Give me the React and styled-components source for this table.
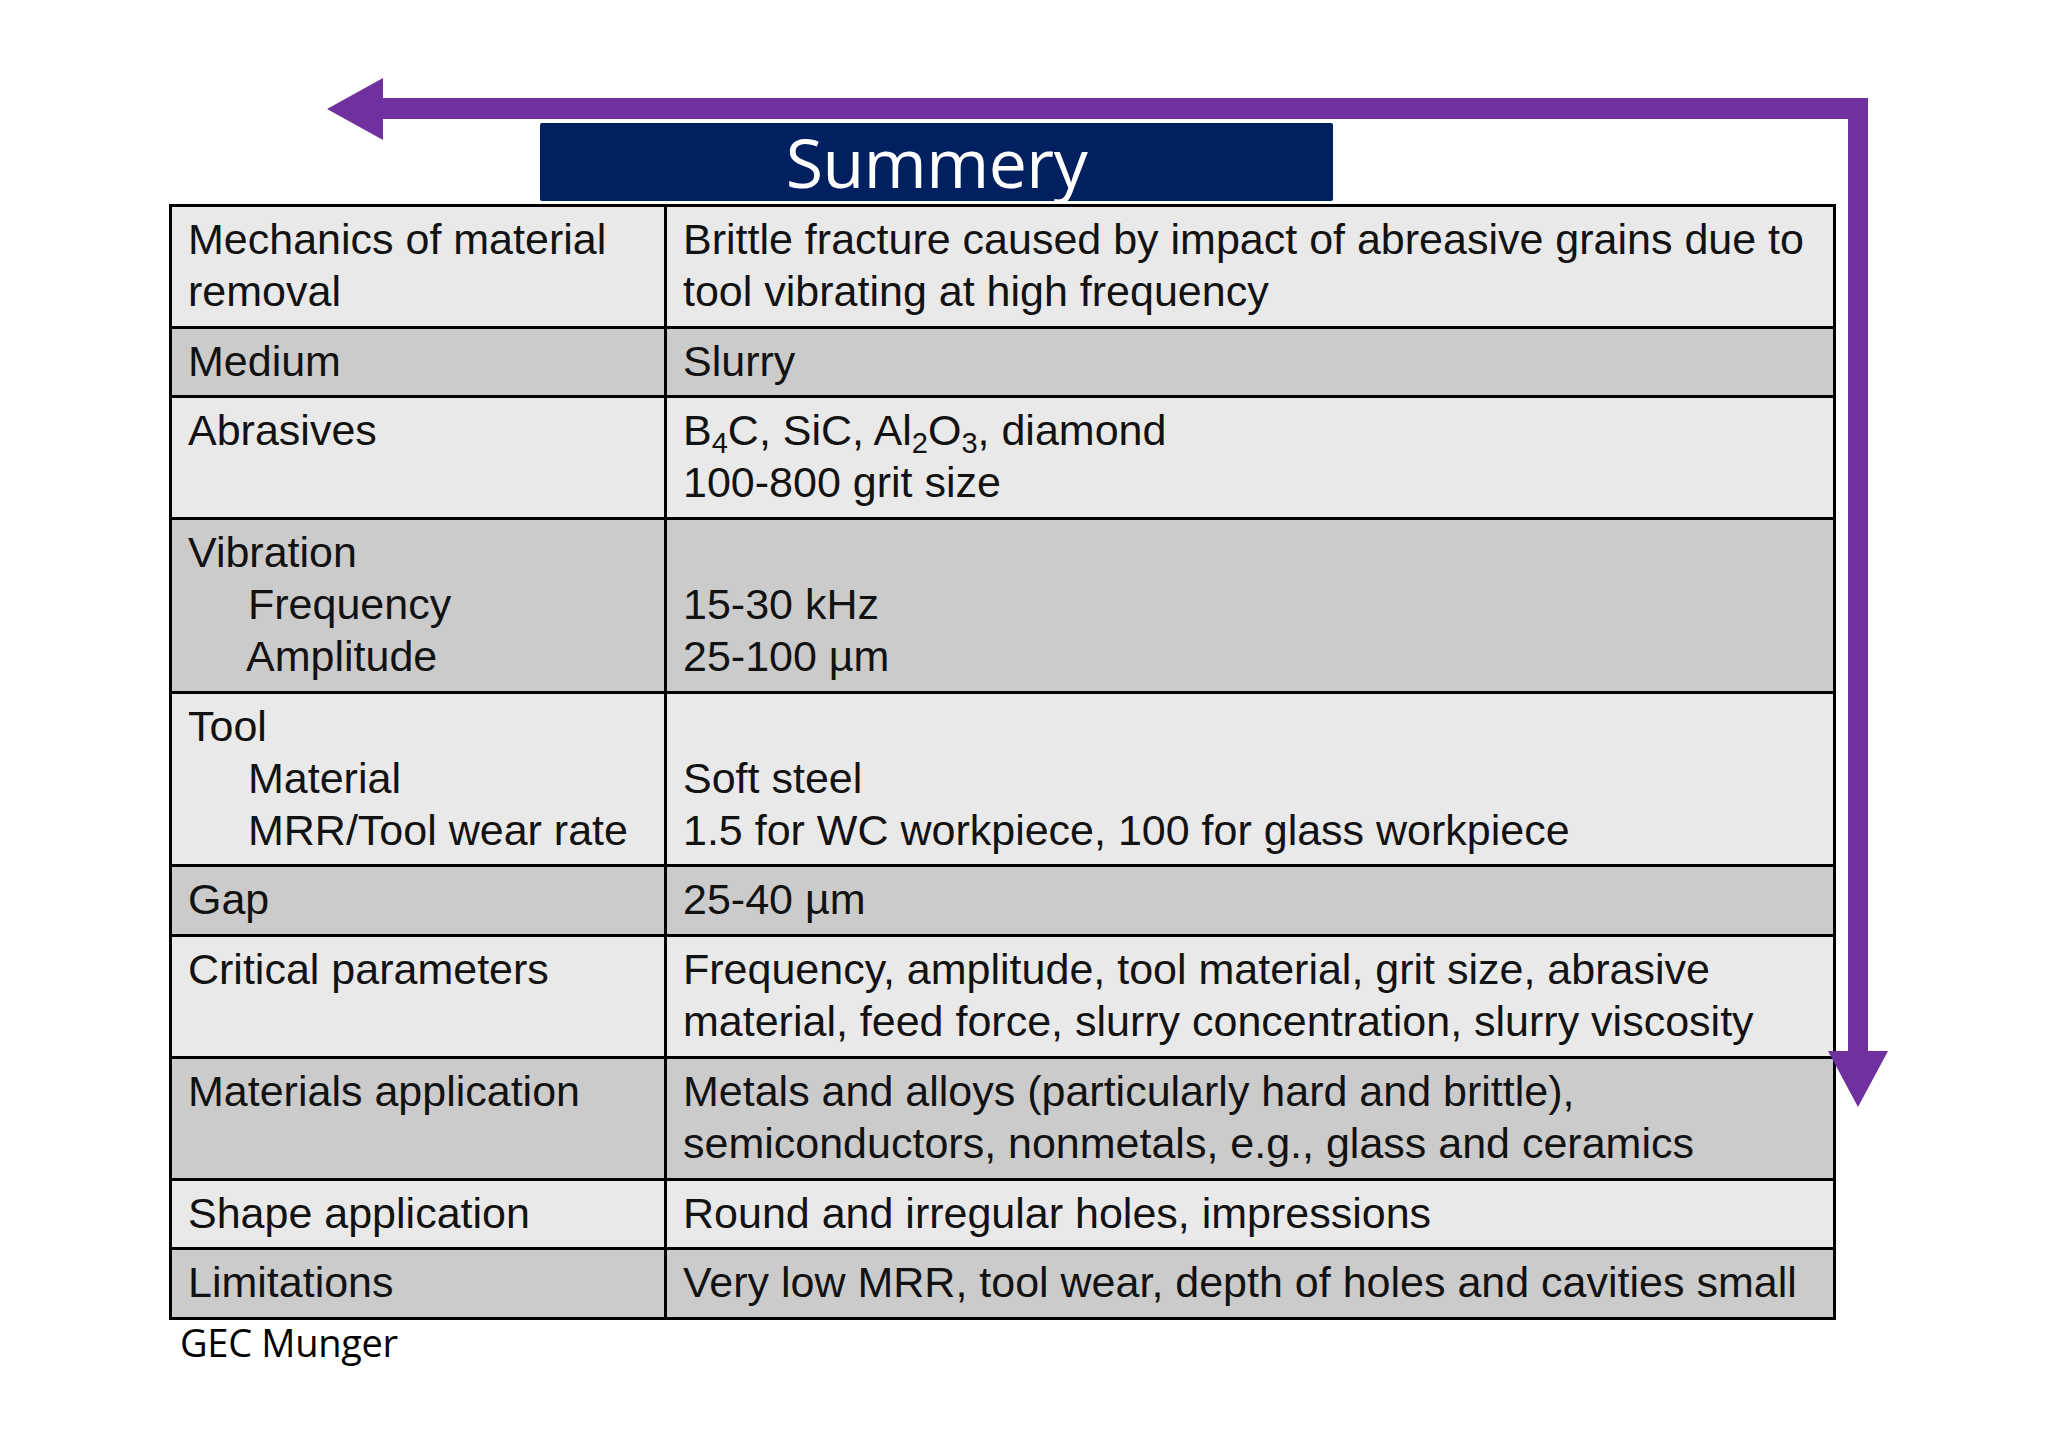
import React from 'react';
import styled, { createGlobalStyle } from 'styled-components';

const GlobalStyle = createGlobalStyle`
  html, body {
    margin: 0;
    padding: 0;
    background: #ffffff;
  }
  body {
    width: 2048px;
    height: 1448px;
    overflow: hidden;
  }
`;

const Slide = styled.div`
  position: relative;
  width: 2048px;
  height: 1448px;
  padding-top: 123px;
  box-sizing: border-box;
  background: #ffffff;
`;

const Arrow = styled.svg`
  position: absolute;
  top: 0;
  left: 0;
  width: 2048px;
  height: 1448px;
  pointer-events: none;
  z-index: 2;
`;

const TitleBar = styled.div`
  margin-left: 540px;
  width: 793px;
  height: 78px;
  box-sizing: border-box;
  padding-top: 5px;
  background: #002060;
  border-radius: 2px;
`;

const TitleText = styled.h1`
  margin: 0;
  font-family: "Open Sans", "Noto Sans", sans-serif;
  font-weight: 400;
  font-size: 68px;
  line-height: 68px;
  letter-spacing: -0.5px;
  text-align: center;
  color: #ffffff;
`;

const Table = styled.div`
  margin: 3px 0 0 169px;
  width: 1667px;
  box-sizing: border-box;
  border: 3px solid #000;
  font-family: "Liberation Sans", Arial, sans-serif;
  font-size: 43px;
  line-height: 52px;
  color: #121212;
`;

const Row = styled.div`
  display: grid;
  grid-template-columns: 495px 1fr;
  background: ${(p) => (p.$shade ? '#cbcbcc' : '#e9e9ea')};

  & + & {
    border-top: 3px solid #000;
  }
`;

const Cell = styled.div`
  padding: 6px 16px 8.7px;
  white-space: nowrap;

  &:first-child {
    border-right: 3px solid #000;
  }
`;

const Line = styled.div`
  min-height: 52px;
  padding-left: ${(p) => p.$indent || 0}px;
`;

const Sub = styled.sub`
  font-size: 29px;
  line-height: 0;
  vertical-align: -8px;
`;

const Footer = styled.div`
  margin: 0 0 0 180px;
  font-family: "Open Sans", "Noto Sans", sans-serif;
  font-size: 38px;
  line-height: 45px;
  letter-spacing: -0.3px;
  color: #000;
`;

const rows = [
  {
    left: ['Mechanics of material', 'removal'],
    right: ['Brittle fracture caused by impact of abreasive grains due to', 'tool vibrating at high frequency'],
  },
  { left: ['Medium'], right: ['Slurry'] },
  {
    left: ['Abrasives'],
    right: [
      <>
        B<Sub>4</Sub>C, SiC, Al<Sub>2</Sub>O<Sub>3</Sub>, diamond
      </>,
      '100-800 grit size',
    ],
  },
  {
    left: ['Vibration', { text: 'Frequency', indent: 60 }, { text: 'Amplitude', indent: 58 }],
    right: ['', '15-30 kHz', '25-100 µm'],
  },
  {
    left: ['Tool', { text: 'Material', indent: 60 }, { text: 'MRR/Tool wear rate', indent: 60 }],
    right: ['', 'Soft steel', '1.5 for WC workpiece, 100 for glass workpiece'],
  },
  { left: ['Gap'], right: ['25-40 µm'] },
  {
    left: ['Critical parameters'],
    right: ['Frequency, amplitude, tool material, grit size, abrasive', 'material, feed force, slurry concentration, slurry viscosity'],
  },
  {
    left: ['Materials application'],
    right: ['Metals and alloys (particularly hard and brittle),', 'semiconductors, nonmetals, e.g., glass and ceramics'],
  },
  { left: ['Shape application'], right: ['Round and irregular holes, impressions'] },
  { left: ['Limitations'], right: ['Very low MRR, tool wear, depth of holes and cavities small'] },
];

const renderLines = (lines) =>
  lines.map((line, i) => {
    if (line && typeof line === 'object' && 'text' in line) {
      return (
        <Line key={i} $indent={line.indent}>
          {line.text}
        </Line>
      );
    }
    return <Line key={i}>{line}</Line>;
  });

export default function App() {
  return (
    <>
      <GlobalStyle />
      <Slide>
        <Arrow viewBox="0 0 2048 1448">
          <polygon
            fill="#7030a0"
            points="327,109 383,78 383,98 1868,98 1868,1051 1888,1051 1858,1107 1828,1051 1848,1051 1848,119 383,119 383,140"
          />
        </Arrow>

        <TitleBar>
          <TitleText>Summery</TitleText>
        </TitleBar>

        <Table>
          {rows.map((row, i) => (
            <Row key={i} $shade={i % 2 === 1}>
              <Cell>{renderLines(row.left)}</Cell>
              <Cell>{renderLines(row.right)}</Cell>
            </Row>
          ))}
        </Table>

        <Footer>GEC Munger</Footer>
      </Slide>
    </>
  );
}
